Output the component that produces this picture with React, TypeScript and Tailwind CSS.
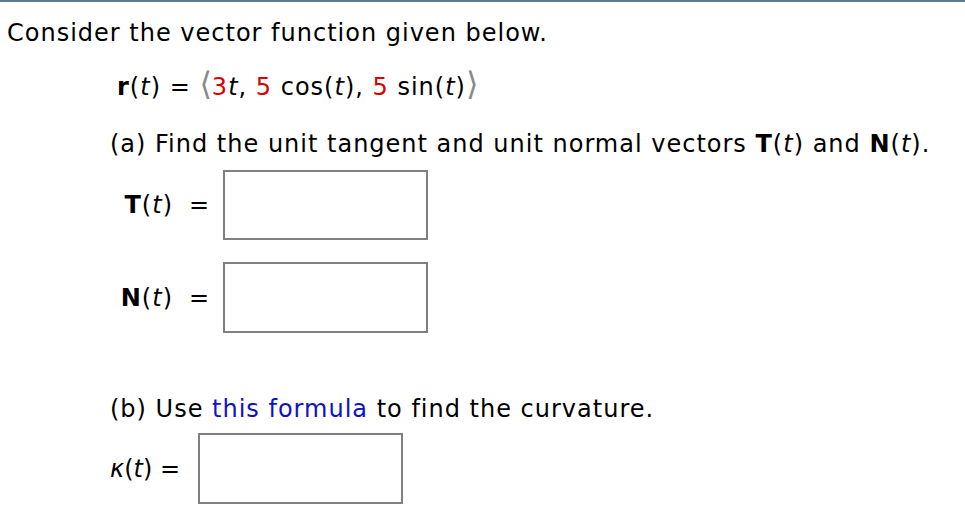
import React from "react";

const T = () => <i className="italic">t</i>;

export default function App() {
  return (
    <div className="w-[965px] h-[529px] bg-white border-t-2 border-[#5f7b8b] font-['DejaVu_Sans',sans-serif] text-[24px] leading-[28px] tracking-[1px] text-black overflow-hidden">
      <p className="pl-[7px] pt-[17px]">Consider the vector function given below.</p>
      <div className="pl-[110px]">
        <p className="pl-[7px] mt-[26px] h-[28px] whitespace-pre">
          <b className="font-bold">r</b>(<T />) = <span className="text-[#8a8a8a] text-[32px] leading-[22px] tracking-normal">⟨</span>
          <span className="text-[#d90000]">3</span>
          <T />, <span className="text-[#d90000]">5</span> cos(<T />), <span className="text-[#d90000]">5</span> sin(<T />)
          <span className="text-[#8a8a8a] text-[32px] leading-[22px] tracking-normal">⟩</span>
        </p>
        <p className="mt-[29px]">
          (a) Find the unit tangent and unit normal vectors <b className="font-bold">T</b>(<T />) and{" "}
          <b className="font-bold">N</b>(<T />).
        </p>
        <div className="mt-[12px] flex items-center">
          <span className="w-[63px] text-right">
            <b className="font-bold">T</b>(<T />)
          </span>
          <span className="ml-[16px]">=</span>
          <div className="ml-[13px] w-[205px] h-[70px] border-2 border-[#808080]" />
        </div>
        <div className="mt-[22px] flex items-center">
          <span className="w-[63px] text-right">
            <b className="font-bold">N</b>(<T />)
          </span>
          <span className="ml-[16px]">=</span>
          <div className="ml-[13px] w-[205px] h-[71px] border-2 border-[#808080]" />
        </div>
        <p className="mt-[62px]">
          (b) Use <span className="text-[#1010c8]">this formula</span> to find the curvature.
        </p>
        <div className="mt-[10px] flex items-center">
          <span className="whitespace-pre tracking-normal">
            <i className="italic">κ</i>(<T />) =
          </span>
          <div className="ml-[18px] w-[205px] h-[71px] border-2 border-[#808080]" />
        </div>
      </div>
    </div>
  );
}
